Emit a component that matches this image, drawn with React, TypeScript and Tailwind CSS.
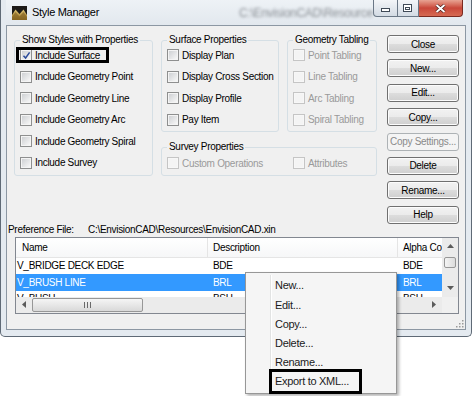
import clsx from "clsx";

// Win7-era "Style Manager" dialog with a context menu open over the style list.

const leftRows = [
  { label: "Include Surface", checked: true },
  { label: "Include Geometry Point" },
  { label: "Include Geometry Line" },
  { label: "Include Geometry Arc" },
  { label: "Include Geometry Spiral" },
  { label: "Include Survey" },
];

const surfaceRows = ["Display Plan", "Display Cross Section", "Display Profile", "Pay Item"];
const tablingRows = ["Point Tabling", "Line Tabling", "Arc Tabling", "Spiral Tabling"];

const buttons = [
  { label: "Close" },
  { label: "New..." },
  { label: "Edit..." },
  { label: "Copy..." },
  { label: "Copy Settings...", disabled: true },
  { label: "Delete" },
  { label: "Rename..." },
  { label: "Help" },
];

const styles = [
  { name: "V_BRIDGE DECK EDGE", desc: "BDE", alpha: "BDE" },
  { name: "V_BRUSH LINE", desc: "BRL", alpha: "BRL", selected: true },
  { name: "V_BUSH", desc: "BSH", alpha: "BSH" },
];

const menuItems = ["New...", "Edit...", "Copy...", "Delete...", "Rename...", "Export to XML..."];

function CheckBox({ checked = false, disabled = false }: { checked?: boolean; disabled?: boolean }) {
  return (
    <span
      className={clsx(
        "w-[12px] h-[12px] shrink-0 border p-[1px] flex",
        disabled ? "border-[#c5c5c5] bg-[#f7f7f7]" : "border-[#8e8f8f] bg-[#f4f4f4]"
      )}
    >
      <span
        className={clsx(
          "flex-1 flex items-center justify-center",
          disabled ? "bg-[#f4f4f4]" : "bg-linear-to-br from-[#cfd1d4] to-[#f7f7f7]"
        )}
      >
        {checked && (
          <svg width="9" height="9" viewBox="0 0 9 9">
            <path d="M1.5 4.8 L3.6 7 L7.6 1.4" fill="none" stroke="#2a4a9a" strokeWidth="1.5" />
          </svg>
        )}
      </span>
    </span>
  );
}

function CheckRow({ label, checked, disabled, className }: { label: string; checked?: boolean; disabled?: boolean; className?: string }) {
  return (
    <div className={clsx("flex items-center gap-[3px] h-[21.6px] whitespace-nowrap", className)}>
      <CheckBox checked={checked} disabled={disabled} />
      <span className={disabled ? "text-[#9a9a9a]" : "text-black"}>{label}</span>
    </div>
  );
}

function Group({ title, className, children }: { title: string; className?: string; children: React.ReactNode }) {
  return (
    <fieldset className={clsx("border border-[#d5dfe5] rounded-[3px] px-[5px] min-w-0", className)}>
      <legend className="px-[2px] leading-[12px] whitespace-nowrap">{title}</legend>
      {children}
    </fieldset>
  );
}

function Arrow({ dir }: { dir: "up" | "down" | "left" | "right" }) {
  const pts = {
    up: "0,4 3.5,0 7,4",
    down: "0,0 3.5,4 7,0",
    left: "4,0 0,3.5 4,7",
    right: "0,0 4,3.5 0,7",
  }[dir];
  const vertical = dir === "up" || dir === "down";
  return (
    <svg width={vertical ? 7 : 4} height={vertical ? 4 : 7} viewBox={vertical ? "0 0 7 4" : "0 0 4 7"}>
      <polygon points={pts} fill="#5b5b5b" />
    </svg>
  );
}

function TitleBar() {
  return (
    <div className="h-[25px] flex items-center bg-linear-to-b from-[#eef2f6] to-[#e2e8ee] whitespace-nowrap">
      <svg width="15" height="14" viewBox="0 0 15 14" className="ml-[6px] shrink-0">
        <defs>
          <linearGradient id="gold" x1="0" y1="0" x2="0" y2="1">
            <stop offset="0" stopColor="#f3dc8c" />
            <stop offset="1" stopColor="#9a7426" />
          </linearGradient>
        </defs>
        <rect x="0" y="0" width="15" height="14" fill="url(#gold)" />
        <polygon points="0,0 15,0 15,9 11.5,3.5 7.5,8 3.5,3.5 0,9" fill="#1c1a17" />
        <polygon points="0,11 3.5,6 7.5,10.5 11.5,6 15,11 15,14 0,14" fill="#7a5a1c" opacity="0.6" />
      </svg>
      <span className="ml-[5px] shrink-0 text-[11px] text-black">Style Manager</span>
      <span className="ml-[140px] shrink-0 text-[12px] text-[#8a8f95] blur-[1.4px]">C:\EnvisionCAD\Resource</span>
      <div className="ml-auto mr-[4px] self-start flex h-[17px] shrink-0">
        <div className="w-[25px] border border-t-0 border-[#6a7786] rounded-bl-[4px] bg-linear-to-b from-[#f3f5f8] to-[#d3dbe4] flex items-center justify-center">
          <span className="w-[9px] h-[4px] border border-[#3f4a57] bg-white mt-[3px]" />
        </div>
        <div className="w-[21px] border border-t-0 border-l-0 border-[#6a7786] bg-linear-to-b from-[#f3f5f8] to-[#d3dbe4] flex items-center justify-center">
          <span className="w-[9px] h-[8px] border border-[#3f4a57] bg-white flex items-center justify-center">
            <span className="w-[5px] h-[3px] border border-[#3f4a57]" />
          </span>
        </div>
        <div className="w-[44px] border border-t-0 border-l-0 border-[#7b2a20] rounded-br-[4px] bg-linear-to-b from-[#e7a393] via-[#c9473a] to-[#d66a53] flex items-center justify-center">
          <svg width="11" height="9" viewBox="0 0 11 9">
            <path d="M1.5 1 L9.5 8 M9.5 1 L1.5 8" stroke="#3a1410" strokeWidth="3.2" />
            <path d="M1.5 1 L9.5 8 M9.5 1 L1.5 8" stroke="#ffffff" strokeWidth="2" />
          </svg>
        </div>
      </div>
    </div>
  );
}

function StyleList() {
  return (
    <div className="ml-[8px] mt-[1px] w-[444px] h-[77px] border border-[#828790] bg-white flex flex-col">
      <div className="flex h-[59px]">
        <div className="w-[426px] flex flex-col">
          <div className="h-[20px] grid grid-cols-[192px_190px_1fr] border-b border-[#e5e5e5] bg-linear-to-b from-white to-[#f6f7f8] whitespace-nowrap">
            <div className="pl-[6px] flex items-center border-r border-[#e5e5e5]">Name</div>
            <div className="pl-[5px] flex items-center border-r border-[#e5e5e5]">Description</div>
            <div className="pl-[5px] flex items-center overflow-hidden">Alpha Co</div>
          </div>
          <div className="flex-1 overflow-hidden">
            {styles.map((s) => (
              <div
                key={s.name}
                className={clsx(
                  "h-[16.5px] grid grid-cols-[192px_190px_1fr] items-center whitespace-nowrap",
                  s.selected ? "bg-[#3399ff] text-white" : "text-black"
                )}
              >
                <div className="pl-[1px]">{s.name}</div>
                <div className="pl-[5px]">{s.desc}</div>
                <div className="pl-[5px]">{s.alpha}</div>
              </div>
            ))}
          </div>
        </div>
        <div className="w-[16px] bg-[#ebebeb] flex flex-col items-center">
          <div className="h-[17px] flex items-center justify-center">
            <Arrow dir="up" />
          </div>
          <div className="flex-1 w-full flex flex-col items-center">
            <span className="mt-[2px] w-[12px] h-[11px] rounded-[2px] border border-[#979797] bg-linear-to-r from-[#f4f4f4] to-[#dcdcdc]" />
          </div>
          <div className="h-[17px] flex items-center justify-center">
            <Arrow dir="down" />
          </div>
        </div>
      </div>
      <div className="flex h-[16px]">
        <div className="w-[426px] bg-[#ebebeb] flex items-center">
          <div className="w-[16px] flex justify-center">
            <Arrow dir="left" />
          </div>
          <div className="w-[111px] h-[14px] rounded-[2px] border border-[#979797] bg-linear-to-b from-[#f5f5f5] to-[#d9d9d9] flex items-center justify-center">
            <svg width="7" height="6" viewBox="0 0 7 6">
              <path d="M0.5 0 V6 M3.5 0 V6 M6.5 0 V6" stroke="#6a6a6a" strokeWidth="1" />
            </svg>
          </div>
          <div className="ml-auto w-[16px] flex justify-center">
            <Arrow dir="right" />
          </div>
        </div>
        <div className="w-[16px] bg-[#f0f0f0]" />
      </div>
    </div>
  );
}

function ContextMenu() {
  return (
    <div className="absolute left-[245px] top-[272px] w-[152px] h-[122px] border border-[#979797] bg-[#f5f5f5] shadow-[2px_2px_3px_rgba(0,0,0,0.3)] py-[3px] text-[11px] text-[#1b1b1b]">
      <div className="absolute left-[24px] top-[2px] bottom-[2px] w-[2px] border-l border-[#e2e3e3] bg-white" />
      {menuItems.map((item) => (
        <div key={item} className="relative h-[19.2px] flex items-center pl-[29px]">
          {item}
        </div>
      ))}
    </div>
  );
}

export default function App() {
  return (
    <div className="relative w-[474px] h-[396px] bg-white overflow-hidden font-['Liberation_Sans',Arial,sans-serif] text-[10px] tracking-[-0.3px] text-black">
      <div className="w-[472px] h-[337px] flex flex-col border-x border-b border-[#5f6a76] rounded-b-[5px] bg-[#e4eaf0] px-[5px] pb-[6px]">
        <TitleBar />
        <div className="flex-1 border border-[#8c97a3] bg-[#f0f0f0] flex flex-col">
          <div className="flex items-start pt-[8px]">
            <Group title="Show Styles with Properties" className="ml-[7px] w-[139px] h-[142px]">
              <div className="mt-[-1.8px]">
                {leftRows.map((r) => (
                  <CheckRow key={r.label} label={r.label} checked={r.checked} />
                ))}
              </div>
            </Group>
            <div className="ml-[8px] w-[216px] flex flex-col">
              <div className="flex justify-between">
                <Group title="Surface Properties" className="w-[118px] h-[98px]">
                  <div className="mt-[-1.8px]">
                    {surfaceRows.map((r) => (
                      <CheckRow key={r} label={r} />
                    ))}
                  </div>
                </Group>
                <Group title="Geometry Tabling" className="w-[90px] h-[98px]">
                  <div className="mt-[-1.8px]">
                    {tablingRows.map((r) => (
                      <CheckRow key={r} label={r} disabled />
                    ))}
                  </div>
                </Group>
              </div>
              <Group title="Survey Properties" className="mt-[9px] w-[216px] h-[35px]">
                <div className="mt-[-0.8px] flex">
                  <CheckRow label="Custom Operations" disabled className="w-[126px]" />
                  <CheckRow label="Attributes" disabled />
                </div>
              </Group>
            </div>
            <div className="ml-[10px] mt-[1px] w-[72px] flex flex-col gap-[6.4px]">
              {buttons.map((b) => (
                <button
                  key={b.label}
                  className={clsx(
                    "h-[18px] w-full rounded-[3px] border whitespace-nowrap flex items-center justify-center",
                    b.disabled
                      ? "border-[#adb2b5] bg-[#f4f4f4] text-[#8a8a8a]"
                      : "border-[#707070] bg-[linear-gradient(#f2f2f2,#ebebeb_50%,#dddddd_50%,#cfcfcf)] shadow-[inset_0_0_0_1px_#fcfcfc] text-black"
                  )}
                >
                  {b.label}
                </button>
              ))}
            </div>
          </div>
          <div className="ml-[1px] h-[12px] leading-[12px] flex whitespace-nowrap">
            <span className="w-[80px]">Preference File:</span>
            <span>C:\EnvisionCAD\Resources\EnvisionCAD.xin</span>
          </div>
          <StyleList />
          <div className="mt-auto flex justify-end pr-[1px] pb-[1px]">
            <svg width="10" height="10" viewBox="0 0 10 10">
              {[
                [8, 2],
                [8, 5],
                [5, 5],
                [8, 8],
                [5, 8],
                [2, 8],
              ].map(([x, y]) => (
                <rect key={`${x}-${y}`} x={x} y={y} width="1.5" height="1.5" fill="#9a9a9a" />
              ))}
            </svg>
          </div>
        </div>
      </div>

      <ContextMenu />

      {/* annotation boxes drawn over the screenshot */}
      <div className="absolute left-[16px] top-[47px] w-[93px] h-[16px] border-[3px] border-black" />
      <div className="absolute left-[269px] top-[369px] w-[93px] h-[25px] border-[3px] border-black" />
    </div>
  );
}
